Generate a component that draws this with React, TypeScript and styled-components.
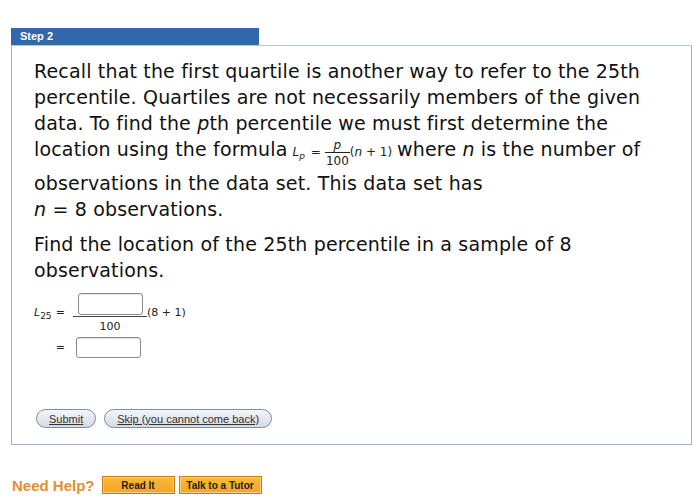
import * as React from "react";
import styled, { createGlobalStyle } from "styled-components";

const GlobalStyle = createGlobalStyle`
  html, body {
    margin: 0;
    padding: 0;
    background: #ffffff;
  }
  body {
    font-family: "DejaVu Sans", Verdana, sans-serif;
  }
`;

const Page = styled.div`
  width: 700px;
  height: 503px;
  padding: 28px 0 0 11px;
  box-sizing: border-box;
  display: flex;
  flex-direction: column;
`;

const StepHeader = styled.div`
  width: 248px;
  height: 17px;
  background: #3168ac;
  color: #ffffff;
  font-family: "Liberation Sans", Arial, sans-serif;
  font-weight: bold;
  font-size: 11px;
  line-height: 17px;
  padding-left: 9px;
  box-sizing: border-box;
`;

const Panel = styled.div`
  width: 681px;
  height: 400px;
  box-sizing: border-box;
  border: 1px solid #9fb0c8;
  border-top-color: #b8c6da;
  padding: 12px 6px 0 22px;
  color: #111111;
`;

const Para = styled.div`
  font-size: 19px;
  line-height: 26px;
  letter-spacing: 0.16px;
  white-space: nowrap;
`;

const Para2 = styled(Para)`
  margin-top: 9px;
`;

const Line = styled.div<{ $h?: number }>`
  height: ${(p) => p.$h || 26}px;
`;

const Var = styled.i`
  font-style: italic;
`;

const InlineFormula = styled.span`
  font-size: 12px;
  letter-spacing: 0;
  color: #222;
  margin: 0 5px 0 5px;
  line-height: 13px;
`;

const Op = styled.span`
  margin: 0 5px 0 6px;
`;

const SmallFrac = styled.span`
  display: inline-flex;
  flex-direction: column;
  align-items: center;
  vertical-align: middle;
  line-height: 12px;
  margin-right: 1px;
`;

const FracTop = styled.span`
  border-bottom: 1px solid #222;
  padding: 0 1px 1px;
  width: 100%;
  text-align: center;
  font-style: italic;
`;

const FracBottom = styled.span`
  padding-top: 2px;
`;

const Sub = styled.sub`
  font-size: 9px;
  vertical-align: -3px;
  line-height: 0;
`;

const WorkRow = styled.div`
  display: flex;
  align-items: flex-start;
  font-size: 11px;
  color: #222;
`;

const FirstRow = styled(WorkRow)`
  margin-top: 10px;
`;

const SecondRow = styled(WorkRow)`
  margin-top: 4px;
  align-items: center;
`;

const Label = styled.div`
  width: 39px;
  display: flex;
  justify-content: space-between;
  padding-right: 8px;
  box-sizing: border-box;
  margin-top: 14px;
  line-height: 12px;
`;

const Fraction = styled.div`
  display: flex;
  flex-direction: column;
  align-items: center;
  width: 74px;
`;

const Numer = styled.div`
  width: 100%;
  display: flex;
  justify-content: center;
  border-bottom: 1px solid #444;
  padding-bottom: 1px;
`;

const Denom = styled.div`
  padding-top: 4px;
  line-height: 12px;
`;

const AnswerBox = styled.div<{ $w: number; $h: number }>`
  width: ${(p) => p.$w}px;
  height: ${(p) => p.$h}px;
  box-sizing: border-box;
  border: 1px solid #8a8a8a;
  border-radius: 3px;
  background: #fff;
  box-shadow: inset 0 1px 1px rgba(0, 0, 0, 0.12);
`;

const Paren = styled.span`
  margin-top: 14px;
  line-height: 12px;
`;

const Eq = styled.span`
  width: 42px;
  box-sizing: border-box;
  text-align: right;
  padding-right: 11px;
`;

const ButtonRow = styled.div`
  display: flex;
  gap: 8px;
  margin-top: 51px;
  margin-left: 2px;
`;

const PillButton = styled.button`
  height: 19px;
  padding: 0 12px;
  border-radius: 10px;
  border: 1px solid #7d8ea6;
  background: linear-gradient(#f4f6f9, #d5dae3);
  font-family: "Liberation Sans", Arial, sans-serif;
  font-size: 11px;
  color: #333;
  text-decoration: underline;
  cursor: pointer;
`;

const HelpBar = styled.div`
  display: flex;
  align-items: center;
  margin-top: 31px;
  margin-left: 1px;
  gap: 7px;
`;

const HelpLabel = styled.span`
  font-family: "Liberation Sans", Arial, sans-serif;
  font-weight: bold;
  font-size: 15px;
  color: #e48f2c;
`;

const HelpButtons = styled.div`
  display: flex;
  gap: 4px;
`;

const HelpButton = styled.button<{ $w: number }>`
  width: ${(p) => p.$w}px;
  height: 18px;
  padding: 0;
  border: 1px solid #c87a18;
  outline: 1px solid #f8cf84;
  outline-offset: -2px;
  background: linear-gradient(#fbb83c, #f5a623);
  font-family: "Liberation Sans", Arial, sans-serif;
  font-weight: bold;
  font-size: 10px;
  color: #222;
  cursor: pointer;
`;

export default function App() {
  return (
    <>
      <GlobalStyle />
      <Page>
        <StepHeader>Step 2</StepHeader>
        <Panel>
          <Para>
            <Line>Recall that the first quartile is another way to refer to the 25th</Line>
            <Line>percentile. Quartiles are not necessarily members of the given</Line>
            <Line>
              data. To find the <Var>p</Var>th percentile we must first determine the
            </Line>
            <Line $h={34}>
              location using the formula
              <InlineFormula>
                <Var>L</Var>
                <Sub>
                  <Var>p</Var>
                </Sub>
                <Op>=</Op>
                <SmallFrac>
                  <FracTop>p</FracTop>
                  <FracBottom>100</FracBottom>
                </SmallFrac>
                (<Var>n</Var> + 1)
              </InlineFormula>
              where <Var>n</Var> is the number of
            </Line>
            <Line>observations in the data set. This data set has</Line>
            <Line>
              <Var>n</Var> = 8 observations.
            </Line>
          </Para>
          <Para2>
            <Line>Find the location of the 25th percentile in a sample of 8</Line>
            <Line>observations.</Line>
          </Para2>
          <FirstRow>
            <Label>
              <span>
                <Var>L</Var>
                <Sub>25</Sub>
              </span>
              <span>=</span>
            </Label>
            <Fraction>
              <Numer>
                <AnswerBox $w={65} $h={22} />
              </Numer>
              <Denom>100</Denom>
            </Fraction>
            <Paren>(8 + 1)</Paren>
          </FirstRow>
          <SecondRow>
            <Eq>=</Eq>
            <AnswerBox $w={65} $h={21} />
          </SecondRow>
          <ButtonRow>
            <PillButton>Submit</PillButton>
            <PillButton>Skip (you cannot come back)</PillButton>
          </ButtonRow>
        </Panel>
        <HelpBar>
          <HelpLabel>Need Help?</HelpLabel>
          <HelpButtons>
            <HelpButton $w={73}>Read It</HelpButton>
            <HelpButton $w={83}>Talk to a Tutor</HelpButton>
          </HelpButtons>
        </HelpBar>
      </Page>
    </>
  );
}
